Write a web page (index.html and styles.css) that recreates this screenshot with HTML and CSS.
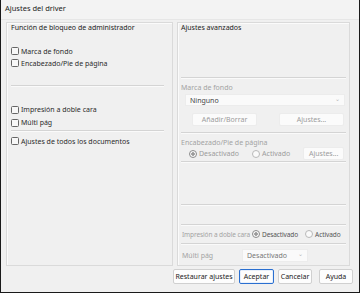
FILE: index.html
```html
<!DOCTYPE html>
<html lang="es">
<head>
    <meta charset="UTF-8">
    <title>Ajustes del driver</title>
    <link rel="stylesheet" href="styles.css">
</head>
<body>
    <div class="window">
        <div class="titlebar">Ajustes del driver</div>

        <div class="panels">
            <div class="panel left">
                <div class="panel-title">Función de bloqueo de administrador</div>
                <div class="group first">
                    <label class="check"><span class="box"></span>Marca de fondo</label>
                    <label class="check"><span class="box"></span>Encabezado/Pie de página</label>
                </div>
                <hr class="sep sep-a">
                <div class="group second">
                    <label class="check"><span class="box"></span>Impresión a doble cara</label>
                    <label class="check"><span class="box"></span>Múlti pág</label>
                </div>
                <hr class="sep sep-b">
                <label class="check last"><span class="box"></span>Ajustes de todos los documentos</label>
            </div>

            <div class="panel right">
                <div class="panel-title">Ajustes avanzados</div>
                <hr class="sep sep-top">

                <div class="label dim">Marca de fondo</div>
                <div class="select wide"><span>Ninguno</span><span class="caret">&#8964;</span></div>
                <div class="btn-row">
                    <span class="btn off">Añadir/Borrar</span>
                    <span class="btn off">Ajustes...</span>
                </div>
                <hr class="sep sep-c">

                <div class="label dim">Encabezado/Pie de página</div>
                <div class="radio-row">
                    <span class="radio on"></span><span class="rlabel">Desactivado</span>
                    <span class="radio"></span><span class="rlabel">Activado</span>
                    <span class="btn off small">Ajustes...</span>
                </div>
                <hr class="sep sep-d">
                <hr class="sep sep-e">
                <hr class="sep sep-f">

                <div class="inline-row duplex">
                    <span class="dim">Impresión a doble cara</span>
                    <span class="radio on"></span><span class="rlabel">Desactivado</span>
                    <span class="radio"></span><span class="rlabel">Activado</span>
                </div>
                <hr class="sep sep-g">
                <div class="inline-row multi">
                    <span class="dim name">Múlti pág</span>
                    <div class="select narrow"><span>Desactivado</span><span class="caret">&#8964;</span></div>
                </div>
            </div>
        </div>

        <div class="footer">
            <span class="btn">Restaurar ajustes</span>
            <span class="btn primary">Aceptar</span>
            <span class="btn">Cancelar</span>
            <span class="btn">Ayuda</span>
        </div>
    </div>
</body>
</html>
```

FILE: styles.css
```css
html, body { margin: 0; padding: 0; }
body { width: 360px; height: 293px; background: #f0f0f0; font-family: 'Noto Sans', 'Open Sans', sans-serif; font-size: 7px; color: #2b2b2b; overflow: hidden; white-space: nowrap; }

.window { box-sizing: border-box; width: 360px; height: 293px; border: 1px solid #1a1a1a; border-top: none; background: #f0f0f0; }
.titlebar { height: 20px; line-height: 16px; padding-left: 4px; font-size: 7.5px; background: #f3f3f3; color: #222; border-bottom: 1px solid #e6e6e6; box-sizing: border-box; }

.panels { display: flex; gap: 4px; padding: 2px 0 0 5px; height: 244px; box-sizing: border-box; }
.panel { box-sizing: border-box; height: 244px; border: 1px solid #dadada; box-shadow: inset 1px 1px 0 #fbfbfb; display: flex; flex-direction: column; }
.panel.left { width: 167px; padding: 0 8px 0 4px; }
.panel.right { width: 173px; padding: 0 3px 0 3px; }
.panel-title { height: 10px; line-height: 10px; margin-top: 0; color: #222; }

.sep { border: none; border-top: 1px solid #d4d4d4; border-bottom: 1px solid #fafafa; margin: 0; }

.check { display: flex; align-items: center; height: 12px; gap: 2px; }
.box { flex-shrink: 0; width: 6px; height: 6px; border: 1px solid #666; border-radius: 1.5px; background: #f7f7f7; }
.group.first { margin-top: 12px; }
.sep-a { margin-top: 16px; }
.group.second { margin-top: 16px; }
.group.second .check { height: 13px; }
.sep-b { margin-top: 1px; }
.check.last { margin-top: 3px; }

.dim { color: #a3a3a3; }
.sep-top { margin-top: 44px; }
.label { height: 10px; line-height: 10px; margin-top: 4px; }
.select { box-sizing: border-box; display: flex; align-items: center; justify-content: space-between; background: #fafafa; border: 1px solid #ececec; height: 12px; padding: 0 4px; color: #444; }
.select.wide { margin: 1px 1px 0 4px; }
.caret { color: #b5b5b5; font-size: 6px; line-height: 6px; margin-top: -3px; }

.btn-row { display: flex; justify-content: space-between; margin: 7px 2px 0 11px; }
.btn { box-sizing: border-box; display: inline-flex; align-items: center; justify-content: center; height: 13px; background: #fdfdfd; border: 1px solid #d0d0d0; border-radius: 2px; color: #222; }
.btn.off { width: 65px; color: #9c9c9c; background: #fbfbfb; border-color: #ececec; }
.btn.small { width: 48px; margin-left: auto; margin-right: 2px; }
.sep-c { margin-top: 6px; }

.radio-row { display: flex; align-items: center; height: 13px; margin-top: -1px; padding-left: 8px; }
.radio { flex-shrink: 0; width: 6px; height: 6px; border: 1px solid #b9b9b9; border-radius: 50%; background: #fafafa; box-sizing: content-box; }
.radio.on { border-color: #8c8c8c; background: radial-gradient(circle, #9a9a9a 0 1.5px, #fafafa 2px); }
.rlabel { color: #9c9c9c; margin: 0 13px 0 2px; }
.sep-d { margin-top: 1px; }
.sep-e { margin-top: 41px; }
.sep-f { margin-top: 18px; }

.inline-row { display: flex; align-items: center; height: 16px; padding-left: 1px; }
.duplex { font-size: 6.5px; letter-spacing: -0.1px; }
.inline-row .dim:first-child { margin-right: 2px; }
.inline-row .rlabel { color: #555; margin: 0 7px 0 2px; }
.sep-g { margin-top: 1px; }
.multi { height: 20px; }
.multi .name { width: 58px; }
.select.narrow { width: 66px; height: 13px; color: #777; }

.footer { display: flex; justify-content: flex-end; gap: 4px; padding: 5px 6px 0 0; }
.footer .btn { height: 15px; padding: 0 4px; }
.footer .btn:nth-child(1) { width: 62px; }
.footer .btn:nth-child(2) { width: 35px; }
.footer .btn:nth-child(3) { width: 34px; }
.footer .btn:nth-child(4) { width: 34px; margin-left: 3px; }
.btn.primary { border: 1px solid #2a6fd0; box-shadow: inset 0 0 0 1px #e8f0fb; }
```
